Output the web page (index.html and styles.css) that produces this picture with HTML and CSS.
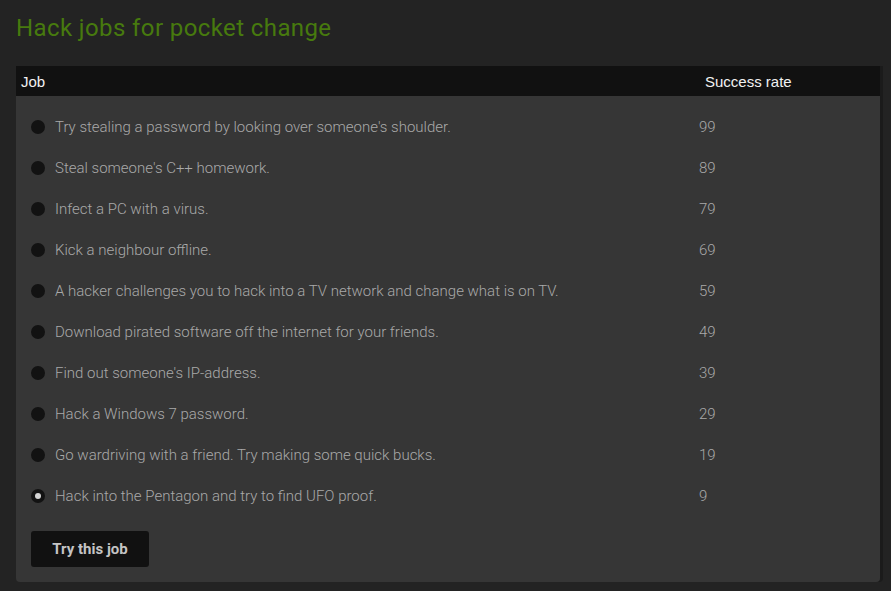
FILE: index.html
```html
<!DOCTYPE html>
<html>
<head>
<meta charset="utf-8">
<link rel="stylesheet" href="styles.css">
</head>
<body>
<div class="page">
  <h1 class="title">Hack jobs for pocket change</h1>
  <div class="table">
    <div class="head">
      <div class="hcell job">Job</div>
      <div class="hcell rate">Success rate</div>
    </div>
    <div class="panel">
      <div class="rows">
        <label class="row"><span class="radio"></span><span class="text">Try stealing a password by looking over someone's shoulder.</span><span class="num">99</span></label>
        <label class="row"><span class="radio"></span><span class="text">Steal someone's C++ homework.</span><span class="num">89</span></label>
        <label class="row"><span class="radio"></span><span class="text">Infect a PC with a virus.</span><span class="num">79</span></label>
        <label class="row"><span class="radio"></span><span class="text">Kick a neighbour offline.</span><span class="num">69</span></label>
        <label class="row"><span class="radio"></span><span class="text">A hacker challenges you to hack into a TV network and change what is on TV.</span><span class="num">59</span></label>
        <label class="row"><span class="radio"></span><span class="text">Download pirated software off the internet for your friends.</span><span class="num">49</span></label>
        <label class="row"><span class="radio"></span><span class="text">Find out someone's IP-address.</span><span class="num">39</span></label>
        <label class="row"><span class="radio"></span><span class="text">Hack a Windows 7 password.</span><span class="num">29</span></label>
        <label class="row"><span class="radio"></span><span class="text">Go wardriving with a friend. Try making some quick bucks.</span><span class="num">19</span></label>
        <label class="row"><span class="radio checked"></span><span class="text">Hack into the Pentagon and try to find UFO proof.</span><span class="num">9</span></label>
      </div>
      <button class="btn">Try this job</button>
    </div>
  </div>
</div>
</body>
</html>
```
FILE: styles.css
```css
html, body {
  margin: 0;
  padding: 0;
  background: #232323;
}
body {
  font-family: Roboto, "Liberation Sans", sans-serif;
}
.page {
  padding: 0 0 0 16px;
  width: 864px;
}
.title {
  margin: 0;
  padding: 14px 0 0 0;
  height: 66px;
  box-sizing: border-box;
  font-family: "Roboto", sans-serif;
  font-weight: 400;
  font-size: 24px;
  line-height: 28px;
  letter-spacing: 0.4px;
  color: #477a0e;
}
.table {
  box-shadow: 3px 0 0 #1b1b1b;
  border-radius: 0 0 4px 4px;
}
.head {
  display: grid;
  grid-template-columns: 1fr 181px;
  height: 30px;
  background: #111111;
  align-items: center;
}
.hcell {
  font-family: "Liberation Sans", Arial, sans-serif;
  font-size: 15px;
  color: #f2f2f2;
}
.job { padding-left: 5px; }
.rate { padding-left: 6px; }
.panel {
  background: #363636;
  padding: 10px 0 15px 0;
  border-radius: 0 0 4px 4px;
}
.rows {
  display: flex;
  flex-direction: column;
}
.row {
  display: grid;
  grid-template-columns: 15px 24px 1fr 181px;
  height: 41px;
  align-items: center;
  font-size: 15px;
  color: #a9a9a9;
}
.radio {
  grid-column: 2;
  width: 14px;
  height: 14px;
  border-radius: 50%;
  background: #121212;
  display: flex;
  align-items: center;
  justify-content: center;
}
.radio.checked::after {
  content: "";
  width: 6px;
  height: 6px;
  border-radius: 50%;
  background: #d4d4d4;
}
.text { grid-column: 3; font-weight: 300; }
.num { grid-column: 4; font-weight: 300; }
.btn {
  margin: 15px 0 0 15px;
  width: 118px;
  height: 36px;
  background: #111111;
  border: none;
  border-radius: 3px;
  color: #c4c4c4;
  font-family: Roboto, sans-serif;
  font-weight: 700;
  font-size: 15px;
  padding: 0;
}
```
